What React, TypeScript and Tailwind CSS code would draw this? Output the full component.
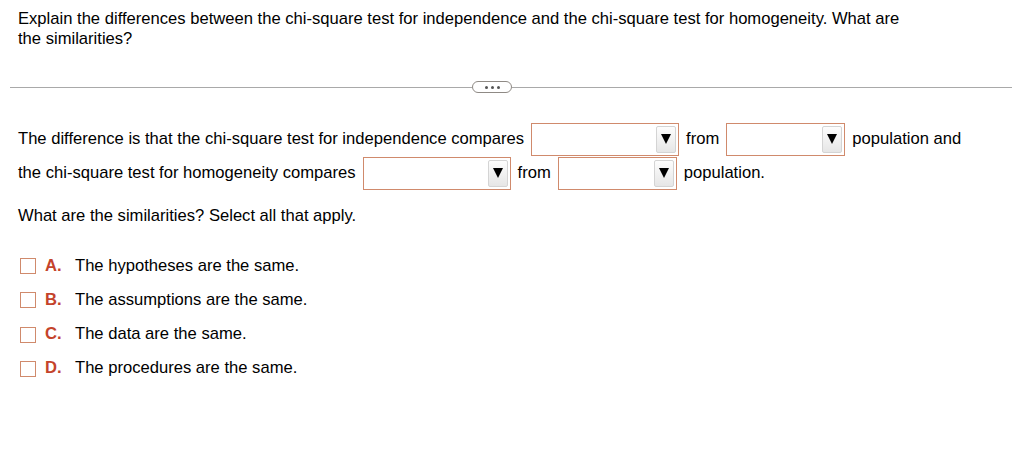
const Dropdown = ({ w }: { w: string }) => (
  <span className={`inline-flex h-[33px] ${w} items-center justify-end border border-[#d08a6c] bg-white pr-[2px] align-middle`}>
    <span className="flex h-[27px] w-[20px] items-center justify-center rounded-[2px] border border-[#d4d4d4] bg-gradient-to-b from-[#fdfdfd] to-[#e6e6e6]">
      <svg width="12" height="12" viewBox="0 0 12 12">
        <polygon points="1,1 11,1 6,11" fill="#000" />
      </svg>
    </span>
  </span>
);

const options = [
  { letter: "A.", text: "The hypotheses are the same." },
  { letter: "B.", text: "The assumptions are the same." },
  { letter: "C.", text: "The data are the same." },
  { letter: "D.", text: "The procedures are the same." },
];

export default function App() {
  return (
    <div className="h-[460px] w-[1024px] bg-white font-['Liberation_Sans',Arial,sans-serif] text-[16.6px] text-black">
      <p className="px-[18px] pt-[9px] leading-[20px]">
        Explain the differences between the chi-square test for independence and the chi-square test for homogeneity. What are
        <br />
        the similarities?
      </p>

      <div className="mt-[32px] flex items-center pl-[10px] pr-[12px]">
        <div className="h-[1px] w-[462px] bg-[#a9a9a9]" />
        <div className="flex h-[12px] w-[40px] items-center justify-center gap-[3px] rounded-full border border-[#8f8a85] bg-white">
          <span className="h-[3px] w-[3px] rounded-full bg-[#555]" />
          <span className="h-[3px] w-[3px] rounded-full bg-[#555]" />
          <span className="h-[3px] w-[3px] rounded-full bg-[#555]" />
        </div>
        <div className="h-[1px] flex-1 bg-[#a9a9a9]" />
      </div>

      <div className="mt-[29px] px-[18px]">
        <div className="flex h-[34px] items-center gap-[7px]">
          <span>The difference is that the chi-square test for independence compares</span>
          <Dropdown w="w-[148px]" />
          <span>from</span>
          <Dropdown w="w-[119px]" />
          <span>population and</span>
        </div>
        <div className="flex h-[34px] items-center gap-[7px]">
          <span>the chi-square test for homogeneity compares</span>
          <Dropdown w="w-[148px]" />
          <span>from</span>
          <Dropdown w="w-[119px]" />
          <span>population.</span>
        </div>
      </div>

      <p className="mt-[16px] px-[18px] leading-[20px]">What are the similarities? Select all that apply.</p>

      <div className="mt-[30px] flex flex-col gap-[14.3px] pl-[20px]">
        {options.map((o) => (
          <label key={o.letter} className="flex h-[20px] items-center">
            <span className="h-[16px] w-[16px] border border-[#d08a6c] bg-white" />
            <span className="ml-[9px] w-[30px] font-bold text-[#c4432b]">{o.letter}</span>
            <span>{o.text}</span>
          </label>
        ))}
      </div>
    </div>
  );
}
